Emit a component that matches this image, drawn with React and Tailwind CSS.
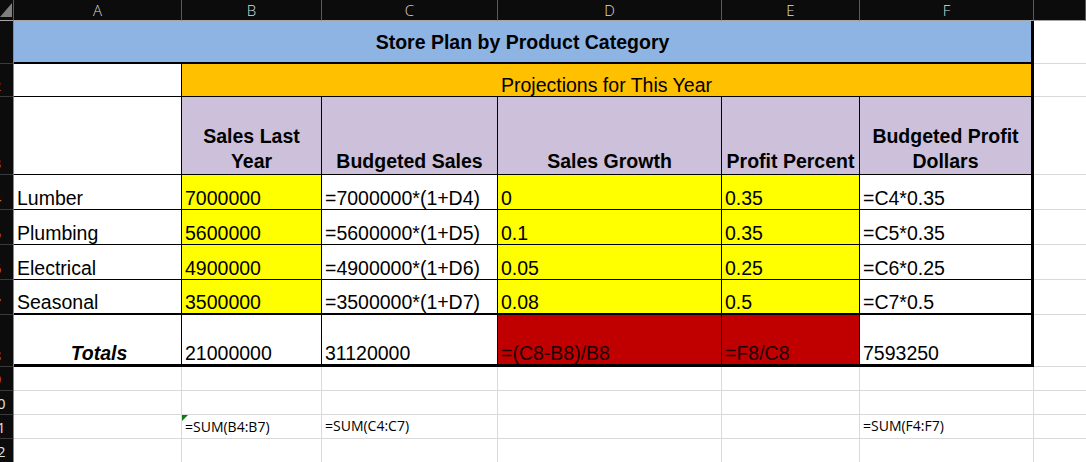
const letters = ['A', 'B', 'C', 'D', 'E', 'F', '']

const data = [
    ['Lumber', '7000000', '=7000000*(1+D4)', '0', '0.35', '=C4*0.35'],
    ['Plumbing', '5600000', '=5600000*(1+D5)', '0.1', '0.35', '=C5*0.35'],
    ['Electrical', '4900000', '=4900000*(1+D6)', '0.05', '0.25', '=C6*0.25'],
    ['Seasonal', '3500000', '=3500000*(1+D7)', '0.08', '0.5', '=C7*0.5'],
]

function RowNum({ n }) {
    const sel = n < 10
    return (
        <div className="flex items-end overflow-hidden bg-[#0c0c0c] border-b border-b-[#3a3a3a] border-r border-r-[#8a8a8a] pb-[2px]">
            <div
                className={`shrink-0 w-[40px] ml-[-23px] text-center text-[15px] leading-[18px] font-['Open_Sans',sans-serif] ${
                    sel ? 'text-[#d2601c]' : 'text-[#e0e0e0]'
                }`}
            >
                {n}
            </div>
        </div>
    )
}

function Cell({ className = '', children }) {
    return (
        <div
            className={`flex items-end pl-[3px] whitespace-nowrap border-r border-b leading-[22px] ${className}`}
        >
            {children}
        </div>
    )
}

function Head({ children, className = '' }) {
    return (
        <div
            className={`flex items-end justify-center text-center px-[2px] border-r border-b border-black bg-[#ccc0da] font-bold leading-[25px] ${className}`}
        >
            {children}
        </div>
    )
}

function Grid({ n }) {
    // empty rows under the table
    return (
        <>
            <RowNum n={n} />
            <Cell className="border-[#d9d9d9]" />
            <Cell className="border-[#d9d9d9]" />
            <Cell className="border-[#d9d9d9]" />
            <Cell className="border-[#d9d9d9]" />
            <Cell className="border-[#d9d9d9]" />
            <Cell className="border-[#d9d9d9]" />
            <Cell className="border-r-0 border-[#d9d9d9]" />
        </>
    )
}

export default function App() {
    const yellow = 'bg-[#ffff00] border-black'
    const white = 'bg-white border-black'
    const small = "text-[14px] leading-[20px] pb-[1px] font-['Open_Sans',sans-serif]"

    return (
        <div className="w-[1086px] h-[462px] overflow-hidden bg-white text-black text-[19.5px] font-['Liberation_Sans',Arial,sans-serif]">
            <div className="grid grid-cols-[14px_168px_140px_176px_224px_138px_174px_1fr] grid-rows-[21px_43px_33px_78px_35px_35px_35px_35px_52px_24px_24px_24px_24px]">
                {/* column letters */}
                <div className="bg-[#0c0c0c] border-b border-b-[#a6a6a6] border-r border-r-[#5a5a5a]">
                    <svg width="13" height="20" viewBox="0 0 13 20">
                        <polygon points="12,3 12,17 0,17" fill="#7f7f7f" />
                    </svg>
                </div>
                {letters.map((l, i) => (
                    <div
                        key={i}
                        className="flex items-center justify-center bg-[#0c0c0c] border-b border-b-[#a6a6a6] border-r border-r-[#5a5a5a] text-[15px] font-light text-[#dcdcdc] font-['Open_Sans',sans-serif]"
                    >
                        {l}
                    </div>
                ))}

                {/* 1 */}
                <RowNum n={1} />
                <div className="col-span-6 flex items-center justify-center pt-[2px] bg-[#8eb4e3] border-b-2 border-r-[3px] border-black font-bold">
                    Store Plan by Product Category
                </div>
                <Cell className="border-r-0 border-[#d9d9d9]" />

                {/* 2 */}
                <RowNum n={2} />
                <Cell className={white} />
                <div className="col-span-5 flex items-end justify-center leading-[22px] bg-[#ffc000] border-b border-r-[3px] border-black">
                    Projections for This Year
                </div>
                <Cell className="border-r-0 border-[#d9d9d9]" />

                {/* 3 */}
                <RowNum n={3} />
                <Cell className={white} />
                <Head>Sales Last Year</Head>
                <Head>Budgeted Sales</Head>
                <Head>Sales Growth</Head>
                <Head className="whitespace-nowrap">Profit Percent</Head>
                <Head className="border-r-[3px]">Budgeted Profit Dollars</Head>
                <Cell className="border-r-0 border-[#d9d9d9]" />

                {data.map((r, i) => (
                    <div key={i} className="contents">
                        <RowNum n={i + 4} />
                        <Cell className={`${white} ${i === 3 ? 'border-b-2' : ''}`}>{r[0]}</Cell>
                        <Cell className={`${yellow} ${i === 3 ? 'border-b-2' : ''}`}>{r[1]}</Cell>
                        <Cell className={`${white} ${i === 3 ? 'border-b-2' : ''}`}>{r[2]}</Cell>
                        <Cell className={`${yellow} ${i === 3 ? 'border-b-2' : ''}`}>{r[3]}</Cell>
                        <Cell className={`${yellow} ${i === 3 ? 'border-b-2' : ''}`}>{r[4]}</Cell>
                        <Cell className={`${white} border-r-[3px] ${i === 3 ? 'border-b-2' : ''}`}>{r[5]}</Cell>
                        <Cell className="border-r-0 border-[#d9d9d9]" />
                    </div>
                ))}

                {/* 8 totals */}
                <RowNum n={8} />
                <Cell className={`${white} border-b-[3px] justify-center pl-0 font-bold italic`}>Totals</Cell>
                <Cell className={`${white} border-b-[3px]`}>21000000</Cell>
                <Cell className={`${white} border-b-[3px]`}>31120000</Cell>
                <Cell className="bg-[#c00000] border-black border-b-[3px] text-[#1a0000]">=(C8-B8)/B8</Cell>
                <Cell className="bg-[#c00000] border-black border-b-[3px] text-[#1a0000]">=F8/C8</Cell>
                <Cell className={`${white} border-b-[3px] border-r-[3px]`}>7593250</Cell>
                <Cell className="border-r-0 border-[#d9d9d9]" />

                <Grid n={9} />
                <Grid n={10} />

                {/* 11 */}
                <RowNum n={11} />
                <Cell className="border-[#d9d9d9]" />
                <div className={`relative flex items-end pl-[3px] border-r border-b border-[#d9d9d9] ${small}`}>
                    <div className="absolute top-0 left-0 w-0 h-0 border-t-[6px] border-t-[#107c10] border-r-[6px] border-r-transparent" />
                    =SUM(B4:B7)
                </div>
                <Cell className={`border-[#d9d9d9] ${small}`}>=SUM(C4:C7)</Cell>
                <Cell className="border-[#d9d9d9]" />
                <Cell className="border-[#d9d9d9]" />
                <Cell className={`border-[#d9d9d9] ${small}`}>=SUM(F4:F7)</Cell>
                <Cell className="border-r-0 border-[#d9d9d9]" />

                <Grid n={12} />
            </div>
        </div>
    )
}
